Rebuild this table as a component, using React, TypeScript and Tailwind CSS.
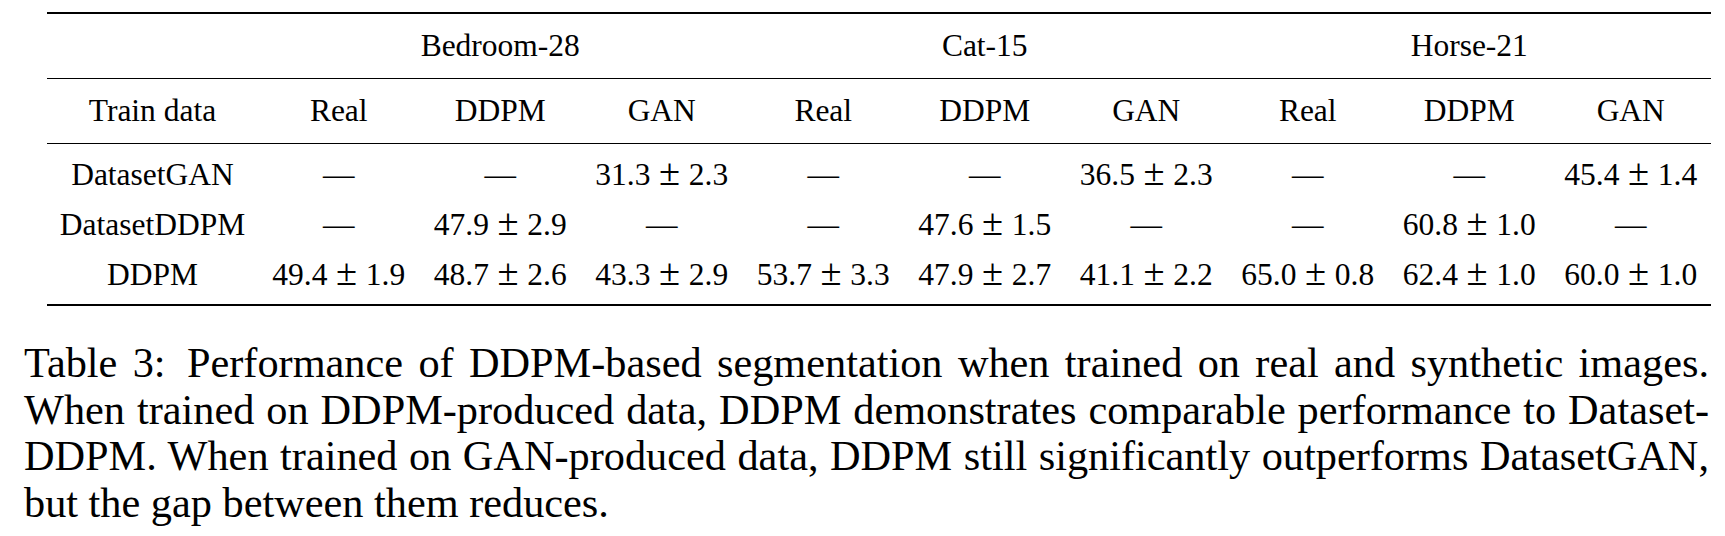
const GROUPS = ["Bedroom-28", "Cat-15", "Horse-21"];
const SUBCOLS = ["Real", "DDPM", "GAN"];

type Cell = [number, number] | null;

const ROWS: { name: string; cells: Cell[] }[] = [
  {
    name: "DatasetGAN",
    cells: [null, null, [31.3, 2.3], null, null, [36.5, 2.3], null, null, [45.4, 1.4]],
  },
  {
    name: "DatasetDDPM",
    cells: [null, [47.9, 2.9], null, null, [47.6, 1.5], null, null, [60.8, 1.0], null],
  },
  {
    name: "DDPM",
    cells: [
      [49.4, 1.9], [48.7, 2.6], [43.3, 2.9],
      [53.7, 3.3], [47.9, 2.7], [41.1, 2.2],
      [65.0, 0.8], [62.4, 1.0], [60.0, 1.0],
    ],
  },
];

function Value({ cell }: { cell: Cell }) {
  if (!cell) return <span>—</span>;
  return (
    <span className="whitespace-nowrap">
      {cell[0].toFixed(1)}
      <span className="inline-block w-[0.78em] mx-[0.22em] text-center">
        <span className="text-[1.22em] leading-none">±</span>
      </span>
      {cell[1].toFixed(1)}
    </span>
  );
}

const grid = "grid grid-cols-[211px_repeat(9,161.5px)]";

export default function App() {
  return (
    <div className="bg-white text-black w-[1725px] h-[536px] pl-[24px] font-['Liberation_Serif','Times_New_Roman',serif]">
      <div className="ml-[23px] w-[1664px] pt-[12px] text-[31.5px] leading-[36px]">
        <div className="h-[2px] bg-black" />
        {/* group header */}
        <div className={`${grid} pt-[14px] pb-[14px]`}>
          <div />
          {GROUPS.map((g) => (
            <div key={g} className="col-span-3 text-center">
              {g}
            </div>
          ))}
        </div>
        <div className="h-[1px] bg-black" />
        <div className={`${grid} pt-[14px] pb-[14px]`}>
          <div className="text-center">Train data</div>
          {GROUPS.flatMap((g) =>
            SUBCOLS.map((c) => (
              <div key={g + c} className="text-center">
                {c}
              </div>
            )),
          )}
        </div>
        <div className="h-[1px] bg-black" />
        <div className="pt-[6px] pb-[4px]">
          {ROWS.map((row) => (
            <div key={row.name} className={`${grid} h-[50px] leading-[50px]`}>
              <div className="text-center">{row.name}</div>
              {row.cells.map((cell, i) => (
                <div key={i} className="text-center">
                  <Value cell={cell} />
                </div>
              ))}
            </div>
          ))}
        </div>
        <div className="h-[2px] bg-black" />
      </div>

      {/* caption */}
      <div className="mt-[34px] w-[1685px] text-[42.3px] leading-[46.5px]">
        <div className="whitespace-nowrap flex justify-between">
          <span>Table</span><span>3:</span><span className="ml-[6px]">Performance</span><span>of</span>
          <span>DDPM-based</span><span>segmentation</span><span>when</span><span>trained</span>
          <span>on</span><span>real</span><span>and</span><span>synthetic</span><span>images.</span>
        </div>
        <div className="text-justify [text-align-last:justify]">
          When trained on DDPM-produced data, DDPM demonstrates comparable performance to Dataset-
        </div>
        <div className="text-justify [text-align-last:justify]">
          DDPM. When trained on GAN-produced data, DDPM still significantly outperforms DatasetGAN,
        </div>
        <div>but the gap between them reduces.</div>
      </div>
    </div>
  );
}
